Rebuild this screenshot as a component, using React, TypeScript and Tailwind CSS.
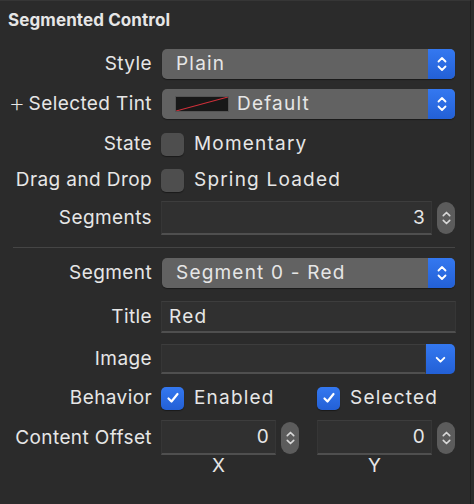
import React from "react";

const UpDown = ({ className = "" }: { className?: string }) => (
  <svg viewBox="0 0 12 20" className={className} fill="none" stroke="currentColor" strokeWidth="1.8" strokeLinecap="round" strokeLinejoin="round">
    <path d="M2.5 7.5 L6 4 L9.5 7.5" />
    <path d="M2.5 12.5 L6 16 L9.5 12.5" />
  </svg>
);

const ChevronDown = () => (
  <svg viewBox="0 0 12 12" className="w-[13px] h-[13px]" fill="none" stroke="currentColor" strokeWidth="1.8" strokeLinecap="round" strokeLinejoin="round">
    <path d="M2.5 4.5 L6 8 L9.5 4.5" />
  </svg>
);

function Popup({ children, pl = "pl-[14px]" }: { children: React.ReactNode; pl?: string }) {
  return (
    <div className="flex h-[30px] w-[293px] ml-[1px] rounded-[5px] bg-[#626262] shadow-[0_1px_1px_rgba(0,0,0,0.4)] overflow-hidden">
      <div className={`flex-1 flex items-center ${pl} gap-[8px] tracking-[1.2px]`}>{children}</div>
      <div className="w-[27px] flex items-center justify-center bg-gradient-to-b from-[#3478f0] to-[#2360d6] text-white">
        <UpDown className="w-[12px] h-[20px]" />
      </div>
    </div>
  );
}

function Checkbox({ checked }: { checked?: boolean }) {
  return checked ? (
    <div className="w-[23px] h-[23px] rounded-[5px] bg-gradient-to-b from-[#3478f0] to-[#2360d6] flex items-center justify-center text-white shadow-[0_1px_1px_rgba(0,0,0,0.4)]">
      <svg viewBox="0 0 16 16" className="w-[16px] h-[16px]" fill="none" stroke="currentColor" strokeWidth="2.2" strokeLinecap="round" strokeLinejoin="round">
        <path d="M3.5 8.5 L6.5 11.5 L12.5 4" />
      </svg>
    </div>
  ) : (
    <div className="w-[23px] h-[23px] rounded-[5px] bg-[#4e4e4e] shadow-[0_1px_1px_rgba(0,0,0,0.4)]" />
  );
}

function Field({ children, className = "" }: { children?: React.ReactNode; className?: string }) {
  return (
    <div className={`h-full bg-[#303030] border-t border-t-[#3d3d3d] border-b-2 border-b-[#4f4f4f] border-x border-x-[#363636] flex items-center tracking-[1.2px] ${className}`}>
      {children}
    </div>
  );
}

function Stepper() {
  return (
    <div className="w-[18px] h-[32px] rounded-full bg-[#5c5c5c] flex items-center justify-center text-[#d8d8d8]">
      <UpDown className="w-[11px] h-[22px]" />
    </div>
  );
}

function Label({ children }: { children: React.ReactNode }) {
  return <div className="text-right whitespace-nowrap tracking-[0.4px]">{children}</div>;
}

function Check({ checked, label, w = "" }: { checked?: boolean; label: string; w?: string }) {
  return (
    <div className={`flex items-center gap-[10px] ${w}`}>
      <Checkbox checked={checked} />
      <span className="tracking-[1.2px]">{label}</span>
    </div>
  );
}

export default function App() {
  return (
    <div
      className="w-[474px] h-[504px] bg-[#2b2b2b] text-[#e6e6e6] text-[19px] leading-[22px] overflow-hidden"
      style={{ fontFamily: "Inter, 'Liberation Sans', sans-serif" }}
    >
      <div className="w-[471px] h-full border-r border-r-[#1e1e1e] border-t border-t-[#363636]">
        <div className="pl-[8px] pt-[8px] text-[17px] font-bold tracking-[0.1px]">Segmented Control</div>

        <div className="grid grid-cols-[152px_1fr] gap-x-[9px] items-center pr-[15px]">
          {/* Style */}
          <div className="mt-[18px] col-span-2 grid grid-cols-subgrid items-center h-[30px]">
            <Label>Style</Label>
            <Popup>Plain</Popup>
          </div>

          {/* Selected Tint */}
          <div className="mt-[10px] col-span-2 grid grid-cols-subgrid items-center h-[30px]">
            <div className="flex justify-end items-center gap-[3px] whitespace-nowrap tracking-[0.4px]">
              <span className="text-[26px] font-extralight leading-[22px] -mt-[3px]">+</span>
              <span>Selected Tint</span>
            </div>
            <Popup pl="pl-[13px]">
              <div className="w-[54px] h-[16px] bg-[#181818] border border-[#555] relative overflow-hidden">
                <svg className="absolute inset-0 w-full h-full" viewBox="0 0 54 16" preserveAspectRatio="none">
                  <path d="M0 16 L54 0" stroke="#d0303a" strokeWidth="1.2" />
                </svg>
              </div>
              <span>Default</span>
            </Popup>
          </div>

          {/* State */}
          <div className="mt-[13px] col-span-2 grid grid-cols-subgrid items-center h-[24px]">
            <Label>State</Label>
            <Check label="Momentary" />
          </div>

          {/* Drag and Drop */}
          <div className="mt-[12px] col-span-2 grid grid-cols-subgrid items-center h-[24px]">
            <Label>Drag and Drop</Label>
            <Check label="Spring Loaded" />
          </div>

          {/* Segments */}
          <div className="mt-[9px] col-span-2 grid grid-cols-subgrid items-center h-[34px]">
            <Label>Segments</Label>
            <div className="flex items-center h-full gap-[5px]">
              <Field className="w-[271px] justify-end pr-[5px]">3</Field>
              <Stepper />
            </div>
          </div>
        </div>

        {/* Separator */}
        <div className="mt-[12px] ml-[13px] w-[442px] h-[1px] bg-[#454545]" />

        <div className="grid grid-cols-[152px_1fr] gap-x-[9px] items-center pr-[15px]">
          {/* Segment */}
          <div className="mt-[10px] col-span-2 grid grid-cols-subgrid items-center h-[30px]">
            <Label>Segment</Label>
            <Popup>Segment 0 - Red</Popup>
          </div>

          {/* Title */}
          <div className="mt-[13px] col-span-2 grid grid-cols-subgrid items-center h-[32px]">
            <Label>Title</Label>
            <Field className="w-[295px] pl-[7px]">Red</Field>
          </div>

          {/* Image */}
          <div className="mt-[11px] col-span-2 grid grid-cols-subgrid items-center h-[30px]">
            <Label>Image</Label>
            <div className="flex h-full w-[294px]">
              <Field className="flex-1" />
              <div className="w-[29px] h-full rounded-r-[5px] flex items-center justify-center bg-gradient-to-b from-[#3478f0] to-[#2360d6] text-white">
                <ChevronDown />
              </div>
            </div>
          </div>

          {/* Behavior */}
          <div className="mt-[12px] col-span-2 grid grid-cols-subgrid items-center h-[24px]">
            <Label>Behavior</Label>
            <div className="flex items-center">
              <Check checked label="Enabled" w="w-[156px]" />
              <Check checked label="Selected" />
            </div>
          </div>

          {/* Content Offset */}
          <div className="mt-[10px] col-span-2 grid grid-cols-subgrid items-center h-[35px]">
            <Label>Content Offset</Label>
            <div className="flex items-center h-full">
              <div className="flex items-center h-full gap-[5px] w-[156px]">
                <Field className="w-[115px] justify-end pr-[5px]">0</Field>
                <Stepper />
              </div>
              <div className="flex items-center h-full gap-[5px]">
                <Field className="w-[115px] justify-end pr-[5px]">0</Field>
                <Stepper />
              </div>
            </div>
          </div>

          {/* X / Y */}
          <div className="col-span-2 grid grid-cols-subgrid items-center h-[22px]">
            <div />
            <div className="flex">
              <div className="w-[115px] text-center">X</div>
              <div className="w-[41px]" />
              <div className="w-[115px] text-center">Y</div>
            </div>
          </div>
        </div>
      </div>
    </div>
  );
}
